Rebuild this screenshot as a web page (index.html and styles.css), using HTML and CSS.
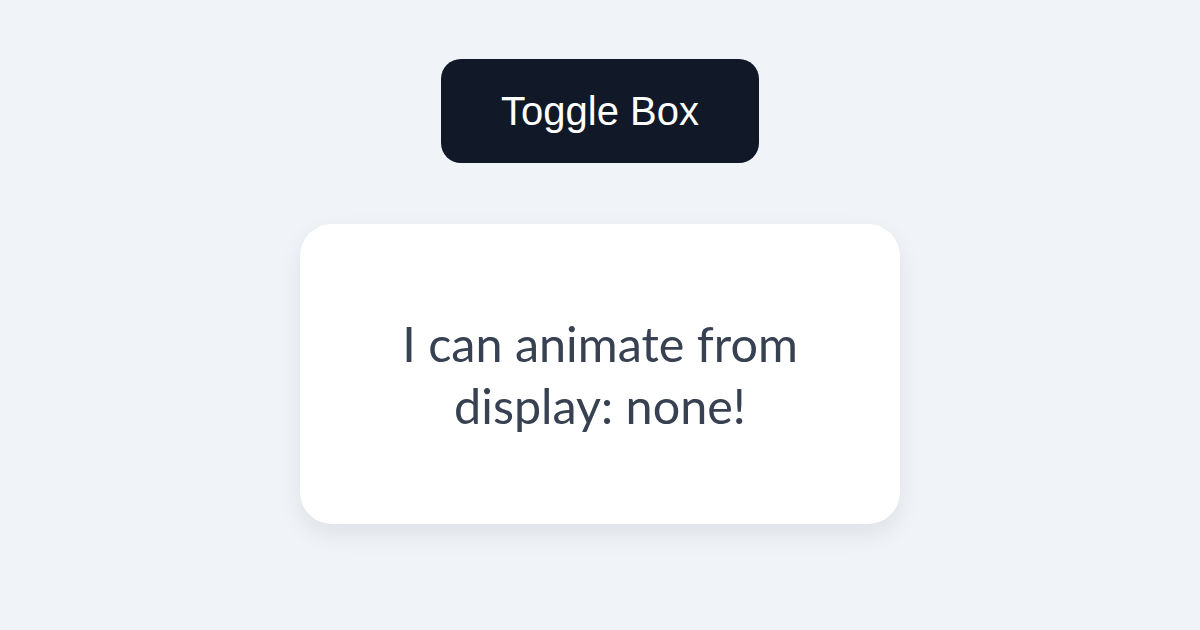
FILE: index.html
```html
<!DOCTYPE html>
<html>
<head>
<meta charset="utf-8">
<link rel="stylesheet" href="styles.css">
</head>
<body>
<main class="page">
  <button class="toggle">Toggle Box</button>
  <div class="box">
    <p class="box-text">I can animate from display: none!</p>
  </div>
</main>
</body>
</html>
```

FILE: styles.css
```css
html, body {
  margin: 0;
  padding: 0;
  background: #f0f4f8;
}
.page {
  display: flex;
  flex-direction: column;
  align-items: center;
  gap: 61px;
  padding-top: 59px;
  height: 630px;
  box-sizing: border-box;
}
.toggle {
  width: 318px;
  height: 104px;
  border: none;
  border-radius: 20px;
  background: #111827;
  color: #ffffff;
  font-family: "Liberation Sans", Arial, sans-serif;
  font-size: 40px;
  padding: 0;
}
.box {
  width: 600px;
  height: 300px;
  box-sizing: border-box;
  background: #ffffff;
  border-radius: 32px;
  box-shadow: 0 10px 25px rgba(0, 0, 0, 0.08);
  display: flex;
  align-items: center;
  justify-content: center;
  padding: 0 80px;
}
.box-text {
  margin: 0;
  text-align: center;
  font-family: Lato, "Noto Sans", sans-serif;
  font-size: 48.5px;
  line-height: 62px;
  color: #374151;
}
```
